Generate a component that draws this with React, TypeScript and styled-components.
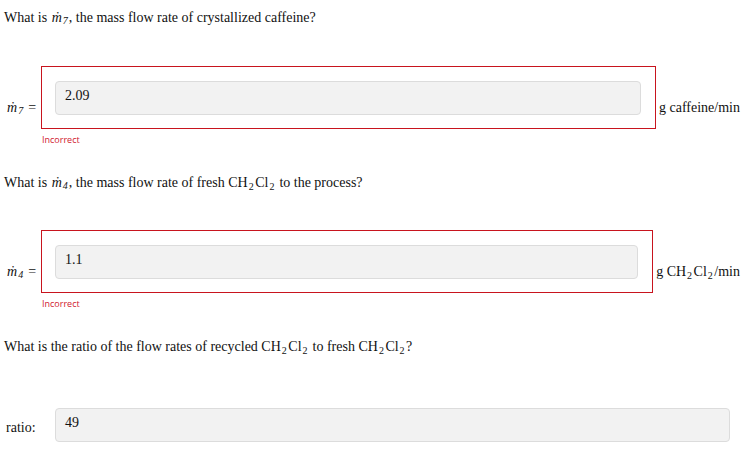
import React from 'react';
import styled, { createGlobalStyle } from 'styled-components';

const GlobalStyle = createGlobalStyle`
  html, body {
    margin: 0;
    padding: 0;
    background: #ffffff;
  }
  body {
    font-family: "Liberation Serif", "Times New Roman", serif;
    color: #111111;
  }
`;

const Page = styled.div`
  width: 745px;
  padding: 10px 0 0 4px;
  box-sizing: border-box;
`;

const Question = styled.div`
  font-size: 14px;
  line-height: 16px;
  height: 16px;
`;

const Sub = styled.sub`
  font-size: 10px;
  line-height: 0;
  vertical-align: -3px;
  padding: 0 1.5px 0 1px;
`;

const MathVar = styled.span`
  font-style: italic;
  white-space: nowrap;
  padding: 0 1px;
`;

const MathSub = styled.sub`
  font-size: 10px;
  line-height: 0;
  vertical-align: -2px;
  font-style: italic;
  padding-left: 1px;
`;

const Eq = styled.span`
  margin-left: 4px;
`;

const Row = styled.div<{ $top: number }>`
  display: flex;
  align-items: flex-start;
  margin-top: ${p => p.$top}px;
`;

const Label = styled.div<{ $offset: number }>`
  width: 37px;
  padding-left: 2px;
  box-sizing: border-box;
  margin-top: ${p => p.$offset}px;
  font-size: 14px;
  line-height: 16px;
  white-space: nowrap;
`;

const AnswerBox = styled.div<{ $wrong?: boolean }>`
  flex: 1;
  border: 1px solid ${p => (p.$wrong ? '#c8141e' : 'transparent')};
  padding: 14px 14px 13px 13px;
`;

const Input = styled.div`
  height: 34px;
  box-sizing: border-box;
  background: #f2f2f2;
  border: 1px solid #dcdcdc;
  border-radius: 4px;
  padding: 6px 9px;
  font-size: 14px;
  line-height: 16px;
`;

const Unit = styled.div`
  margin-top: 34px;
  padding: 0 5px 0 3px;
  font-size: 14px;
  line-height: 16px;
  white-space: nowrap;
`;

const Feedback = styled.div`
  margin: 5px 0 0 38px;
  font-family: "Open Sans", "Noto Sans", sans-serif;
  font-size: 9px;
  line-height: 12px;
  color: #d0202e;
`;

const Block = styled.div<{ $top: number }>`
  margin-top: ${p => p.$top}px;
`;

const Mdot = ({ n }: { n: string }) => (
  <MathVar>
    m&#x307;<MathSub>{n}</MathSub>
  </MathVar>
);

const CH2Cl2 = () => (
  <>
    CH<Sub>2</Sub>Cl<Sub>2</Sub>
  </>
);

export default function App() {
  return (
    <Page>
      <GlobalStyle />
      <Question>
        What is <Mdot n="7" />, the mass flow rate of crystallized caffeine?
      </Question>
      <Row $top={40}>
        <Label $offset={34}>
          <Mdot n="7" />
          <Eq>=</Eq>
        </Label>
        <AnswerBox $wrong>
          <Input>2.09</Input>
        </AnswerBox>
        <Unit>g caffeine/min</Unit>
      </Row>
      <Feedback>Incorrect</Feedback>

      <Block $top={29}>
        <Question>
          What is <Mdot n="4" />, the mass flow rate of fresh <CH2Cl2 /> to the process?
        </Question>
      </Block>
      <Row $top={39}>
        <Label $offset={34}>
          <Mdot n="4" />
          <Eq>=</Eq>
        </Label>
        <AnswerBox $wrong>
          <Input>1.1</Input>
        </AnswerBox>
        <Unit>
          g <CH2Cl2 />/min
        </Unit>
      </Row>
      <Feedback>Incorrect</Feedback>

      <Block $top={29}>
        <Question>
          What is the ratio of the flow rates of recycled <CH2Cl2 /> to fresh <CH2Cl2 />?
        </Question>
      </Block>
      <Row $top={38}>
        <Label $offset={27}>ratio:</Label>
        <AnswerBox>
          <Input>49</Input>
        </AnswerBox>
      </Row>
    </Page>
  );
}
